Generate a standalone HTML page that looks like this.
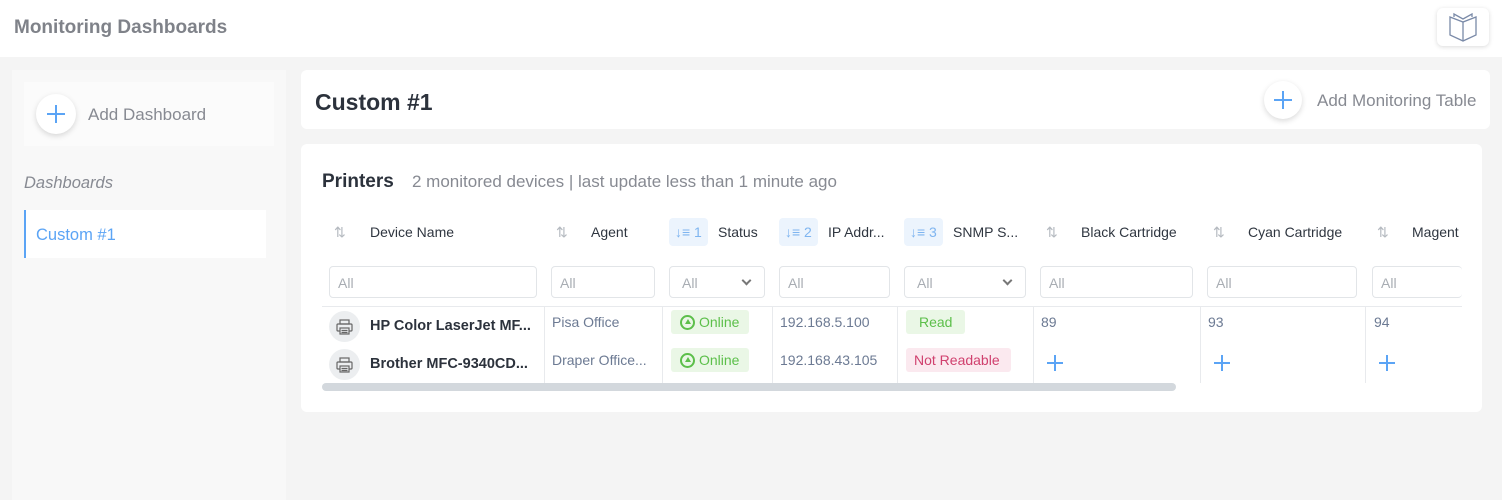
<!DOCTYPE html>
<html><head><meta charset="utf-8"><style>
*{box-sizing:border-box;margin:0;padding:0}
body{width:1502px;height:500px;background:#f4f4f4;font-family:"Liberation Sans",sans-serif;position:relative;overflow:hidden;color:#333}
.a{position:absolute;white-space:nowrap}
.circ{position:absolute;border-radius:50%;background:#fff;box-shadow:0 2px 6px rgba(0,0,0,.15)}
.circ:before,.circ:after{content:"";position:absolute;background:#5ba4f5;left:50%;top:50%}
.circ:before{width:18px;height:2px;margin:-1px 0 0 -9px}
.circ:after{width:2px;height:18px;margin:-9px 0 0 -1px}
.inp{position:absolute;top:266px;height:32px;border:1px solid #e2e5e8;border-radius:4px;background:#fff;font-size:14px;color:#a8adb3;padding:8px 0 0 8px}
.hd{position:absolute;top:224px;font-size:14px;color:#2f3640}
.srt{position:absolute;top:224px;font-size:14px;color:#b5bac0}
.badge{position:absolute;top:218px;height:28px;background:#ecf4fd;border-radius:4px;color:#7fb5f0;font-size:14px;padding:6px 6px}
.vl{position:absolute;top:307px;height:76px;width:1px;background:#e8eaed}
.c{position:absolute;font-size:14px;color:#6c7a93}
.plus{position:absolute;width:16px;height:16px}
.plus:before,.plus:after{content:"";position:absolute;background:#5ba4f5}
.plus:before{left:0;top:7px;width:16px;height:2px}
.plus:after{left:7px;top:0;width:2px;height:16px}
.on{position:absolute;height:24px;background:#eaf7e6;border-radius:3px;color:#5cbf4a;font-size:14px;padding:4px 8px 0 28px}
.on i{position:absolute;left:9px;top:5px;width:15px;height:15px;border:2px solid #5cbf4a;border-radius:50%}
.on i:after{content:"";position:absolute;left:2.5px;top:2px;border-left:3.5px solid transparent;border-right:3.5px solid transparent;border-bottom:5px solid #5cbf4a}
.pr{position:absolute;left:329px;width:31px;height:31px;border-radius:50%;background:#eceef0}
.dd{position:absolute;top:277px;width:7px;height:7px;border-right:2px solid #777;border-bottom:2px solid #777;transform:rotate(45deg)}
</style></head><body>
<div class="a" style="left:0;top:0;width:1502px;height:57px;background:#fff"></div>
<div class="a" style="left:14px;top:17px;font-size:19px;font-weight:bold;color:#7f8289">Monitoring Dashboards</div>
<div class="a" style="left:1437px;top:8px;width:52px;height:38px;background:#fff;border-radius:6px;box-shadow:0 1px 5px rgba(0,0,0,.15)">
<svg width="52" height="38" viewBox="0 0 52 38"><g fill="none" stroke="#7a8aa8" stroke-width="1.3"><path d="M13 9 L26 14 L39 9 V27 L26 33 L13 27 Z"/><path d="M26 14 V33"/><path d="M17 9 V6 L26 11 L35 6 V9"/></g></svg></div>

<div class="a" style="left:12px;top:70px;width:274px;height:430px;background:#f8f8f8"></div>
<div class="a" style="left:24px;top:82px;width:250px;height:64px;background:#fbfbfb"></div>
<div class="circ" style="left:36px;top:94px;width:40px;height:40px"></div>
<div class="a" style="left:88px;top:105px;font-size:17px;color:#878a92">Add Dashboard</div>
<div class="a" style="left:24px;top:174px;font-size:16.5px;font-style:italic;color:#878a92">Dashboards</div>
<div class="a" style="left:24px;top:210px;width:242px;height:48px;background:#fff;border-left:2px solid #5ba4f5"></div>
<div class="a" style="left:36px;top:226px;font-size:16.5px;color:#5ba4f5">Custom #1</div>

<div class="a" style="left:301px;top:70px;width:1189px;height:59px;background:#fff;border-radius:6px"></div>
<div class="a" style="left:315px;top:89px;font-size:23px;font-weight:bold;color:#2c323c">Custom #1</div>
<div class="circ" style="left:1264px;top:81px;width:38px;height:38px"></div>
<div class="a" style="left:1317px;top:91px;font-size:17px;color:#878a92">Add Monitoring Table</div>

<div class="a" style="left:301px;top:144px;width:1181px;height:268px;background:#fff;border-radius:6px"></div>
<div class="a" style="left:322px;top:171px;font-size:19px;font-weight:bold;color:#2c323c">Printers</div>
<div class="a" style="left:412px;top:172px;font-size:17px;color:#878a92">2 monitored devices | last update less than 1 minute ago</div>

<div class="srt" style="left:334px">⇅</div><div class="hd" style="left:370px">Device Name</div>
<div class="srt" style="left:556px">⇅</div><div class="hd" style="left:591px">Agent</div>
<div class="badge" style="left:669px;width:39px">↓≡ 1</div><div class="hd" style="left:718px">Status</div>
<div class="badge" style="left:779px;width:39px">↓≡ 2</div><div class="hd" style="left:828px">IP Addr...</div>
<div class="badge" style="left:904px;width:39px">↓≡ 3</div><div class="hd" style="left:953px">SNMP S...</div>
<div class="srt" style="left:1046px">⇅</div><div class="hd" style="left:1081px">Black Cartridge</div>
<div class="srt" style="left:1213px">⇅</div><div class="hd" style="left:1248px">Cyan Cartridge</div>
<div class="srt" style="left:1377px">⇅</div><div class="hd" style="left:1412px">Magent</div>

<div class="inp" style="left:329px;width:208px">All</div>
<div class="inp" style="left:551px;width:104px">All</div>
<div class="inp" style="left:669px;width:96px;padding-left:12px">All</div><div class="dd" style="left:743px"></div>
<div class="inp" style="left:779px;width:111px">All</div>
<div class="inp" style="left:904px;width:122px;padding-left:12px">All</div><div class="dd" style="left:1004px"></div>
<div class="inp" style="left:1040px;width:153px">All</div>
<div class="inp" style="left:1207px;width:150px">All</div>
<div class="inp" style="left:1372px;width:90px;border-right:none">All</div>

<div class="a" style="left:322px;top:306px;width:1140px;height:1px;background:#e8eaed"></div>
<div class="vl" style="left:544px"></div><div class="vl" style="left:662px"></div><div class="vl" style="left:772px"></div><div class="vl" style="left:897px"></div><div class="vl" style="left:1033px"></div><div class="vl" style="left:1200px"></div><div class="vl" style="left:1365px"></div>

<div class="pr" style="top:311px"><svg width="31" height="31"><g fill="none" stroke="#666" stroke-width="1.2"><rect x="11" y="9" width="9" height="4"/><rect x="8" y="13" width="15" height="7" rx="1"/><rect x="11" y="17" width="9" height="6" fill="#eceef0"/><path d="M12.5 19.5h6M12.5 21.5h6"/></g></svg></div>
<div class="pr" style="top:349px"><svg width="31" height="31"><g fill="none" stroke="#666" stroke-width="1.2"><rect x="11" y="9" width="9" height="4"/><rect x="8" y="13" width="15" height="7" rx="1"/><rect x="11" y="17" width="9" height="6" fill="#eceef0"/><path d="M12.5 19.5h6M12.5 21.5h6"/></g></svg></div>
<div class="a" style="left:370px;top:318px;font-size:14.5px;font-weight:bold;color:#2c323c">HP Color LaserJet MF...</div>
<div class="a" style="left:370px;top:356px;font-size:14.5px;font-weight:bold;color:#2c323c">Brother MFC-9340CD...</div>
<div class="c" style="left:552px;top:314px">Pisa Office</div>
<div class="c" style="left:552px;top:352px">Draper Office...</div>
<div class="on" style="left:671px;top:310px;width:78px"><i></i>Online</div>
<div class="on" style="left:671px;top:348px;width:78px"><i></i>Online</div>
<div class="c" style="left:780px;top:314px">192.168.5.100</div>
<div class="c" style="left:780px;top:352px">192.168.43.105</div>
<div class="a" style="left:906px;top:310px;width:59px;height:24px;background:#eaf7e6;border-radius:3px;color:#5cbf4a;font-size:14px;padding:4px 0 0 13px">Read</div>
<div class="a" style="left:906px;top:348px;width:105px;height:24px;background:#fbe9ef;border-radius:3px;color:#d0406e;font-size:14px;padding:4px 0 0 8px">Not Readable</div>
<div class="c" style="left:1041px;top:314px">89</div>
<div class="c" style="left:1208px;top:314px">93</div>
<div class="c" style="left:1374px;top:314px">94</div>
<div class="plus" style="left:1047px;top:355px"></div>
<div class="plus" style="left:1214px;top:355px"></div>
<div class="plus" style="left:1379px;top:355px"></div>
<div class="a" style="left:322px;top:383px;width:854px;height:8px;background:#d3d8dd;border-radius:4px"></div>
</body></html>
